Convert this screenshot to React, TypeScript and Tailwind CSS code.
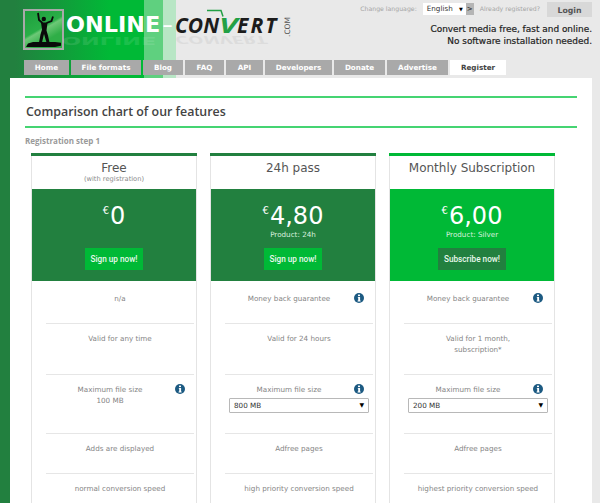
const verdana = "font-['DejaVu_Sans',Verdana,sans-serif]";

const navItems = [
  { label: "Home", w: "w-[45px]", ml: "ml-0" },
  { label: "File formats", w: "w-[70px]", ml: "ml-[2px]" },
  { label: "Blog", w: "w-[40px]", ml: "ml-[2px]" },
  { label: "FAQ", w: "w-[39px]", ml: "ml-[2px]" },
  { label: "API", w: "w-[37px]", ml: "ml-[2px]" },
  { label: "Developers", w: "w-[67px]", ml: "ml-[2px]" },
  { label: "Donate", w: "w-[51px]", ml: "ml-[2px]" },
  { label: "Advertise", w: "w-[61px]", ml: "ml-[2px]" },
];

function InfoIcon() {
  return (
    <svg viewBox="0 0 10 10" className="absolute right-[9px] top-0 w-[10px] h-[10px]">
      <circle cx="5" cy="5" r="5" fill="#1c5a82" />
      <rect x="4" y="1.600" width="2" height="1.500" fill="#fff" />
      <path d="M3.800 4h2.300v3.600h.5v.8H3.600v-.8h.6V4.800h-.4z" fill="#fff" />
    </svg>
  );
}

function Row({ h, pt = "pt-[9px]", children }: { h: string; pt?: string; children: React.ReactNode }) {
  return (
    <div className={`${h} ${pt} ml-[14px] mr-[2px] border-b border-[#e6e6e6] last:border-b-0 text-center text-[7.200px] leading-[11px] text-[#858585]`}>
      {children}
    </div>
  );
}

function SizeRow({ value, selectable }: { value: string; selectable?: boolean }) {
  return (
    <Row h="h-[59px]">
      <div className="relative pr-[20px]">
        <span>Maximum file size</span>
        <InfoIcon />
      </div>
      {selectable ? (
        <div className="relative mt-[3px] ml-[4px] flex h-[15px] w-[140px] items-center rounded-[1px] border border-[#b8b8b8] bg-white pl-[4px] text-[7.200px] text-[#333]">
          {value}
          <span className="absolute right-[4px] top-[1px] text-[6px] leading-[10px] text-black">▼</span>
        </div>
      ) : (
        <div className="pr-[20px]">{value}</div>
      )}
    </Row>
  );
}

function PlanCard({
  name,
  sub,
  price,
  product,
  button,
  dark,
  money,
  valid,
  size,
  ads,
  speed,
}: {
  name: string;
  sub?: string;
  price: string;
  product?: string;
  button: string;
  dark: boolean;
  money: boolean;
  valid: React.ReactNode;
  size: React.ReactNode;
  ads: string;
  speed: string;
}) {
  return (
    <div className="w-[166px] border-x border-[#e4e4e4] bg-white">
      <div className={`h-[3px] -mx-px ${dark ? "bg-[#22803f]" : "bg-[#00b936]"}`} />
      <div className="h-[33px] pt-[5px] text-center text-[#555]">
        <div className="text-[12px] leading-[14px]">{name}</div>
        {sub && <div className="text-[6.700px] leading-[8px] text-[#8a8a8a]">{sub}</div>}
      </div>
      <div className={`h-[92px] pt-[14px] text-center text-white ${dark ? "bg-[#22803f]" : "bg-[#00b936]"}`}>
        <div className="flex justify-center leading-none">
          <span className="mt-[2px] mr-[1px] text-[10px] leading-[12px]">€</span>
          <span className="text-[24px] leading-[26px]">{price}</span>
        </div>
        <div className="h-[11px] text-[7.200px] leading-[11px] text-[#d8f0df]">{product}</div>
        <div
          className={`mx-auto mt-[8px] inline-block h-[22px] px-[6px] font-['Roboto',sans-serif] text-[8.200px] font-medium leading-[22px] text-[#e8f8ec] ${
            dark ? "bg-[#00b936]" : "bg-[#22803f]"
          }`}
        >
          {button}
        </div>
      </div>
      <Row h="h-[43px]" pt="pt-[12px]">
        {money ? (
          <div className="relative pr-[20px]">
            Money back guarantee
            <InfoIcon />
          </div>
        ) : (
          "n/a"
        )}
      </Row>
      <Row h="h-[51px]">{valid}</Row>
      {size}
      <Row h="h-[40px]">{ads}</Row>
      <Row h="h-[30px]">{speed}</Row>
    </div>
  );
}

function Logo() {
  return (
    <div className="flex items-start">
      <div className="w-[41px] h-[41px] border-[2px] border-[#a9a9a9] bg-[linear-gradient(150deg,#1c9e3c_0%,#2aaf48_45%,#6dc877_50%,#2fae47_72%)] overflow-hidden">
        <svg viewBox="0 0 37 37" className="w-[37px] h-[37px]">
          <path d="M13 2l1 7 3.500 3M28 5.500l-1.500 4.500-5 2" fill="none" stroke="#0a0a0a" strokeWidth="1.800" />
          <circle cx="18.800" cy="8" r="2.200" fill="#0a0a0a" />
          <path d="M16 11.500h6.500l-1 8 1.500 5 1.500 7h-3l-2.500-8.500-2 8.500h-3l1.500-8 1.500-5z" fill="#0a0a0a" />
          <path d="M3 32.500l5-1.500h22l6 .8v3l-6 1.200H1z" fill="#0a0a0a" />
        </svg>
      </div>
      <div className="relative ml-[2px] mt-[5px] h-[36px] w-[230px] whitespace-nowrap font-bold">
        <span className="absolute left-0 top-[3px] origin-left scale-x-[1.09] text-[20.500px] leading-[16px] text-white">ONLINE</span>
        <span className="absolute left-[96px] top-[3px] origin-left scale-x-[1.5] text-[20.500px] leading-[16px] font-normal text-white">-</span>
        <span className="absolute left-[109px] top-[3px] font-['Open_Sans',sans-serif] text-[21px] leading-[16px] font-bold italic text-[#1c1c1c]">
          CON
          <span className="inline-block w-[18px] origin-left scale-x-[1.5] text-[#22a045]">V</span>
          <span className="tracking-[2px]">ERT</span>
        </span>
        <svg viewBox="0 0 18 8" className="absolute left-[141px] top-[-5px] w-[18px] h-[8px]">
          <path d="M0 1.500h14l2 6" fill="none" stroke="#22a045" strokeWidth="1.500" />
        </svg>
        <span className="absolute left-[217px] top-[23px] origin-top-left -rotate-90 text-[7.500px] leading-[9px] font-normal text-[#555]">
          .COM
        </span>
        <span aria-hidden className="absolute left-0 top-[18px] origin-center -scale-y-50 scale-x-[1.09] text-[20.500px] leading-[16px] text-white opacity-10">
          ONLINE
        </span>
        <span aria-hidden className="absolute left-[109px] top-[18px] origin-center -scale-y-50 font-['Open_Sans',sans-serif] text-[21px] leading-[16px] font-bold italic text-black opacity-5">
          CONVERT
        </span>
      </div>
    </div>
  );
}

export default function App() {
  return (
    <div className={`${verdana} w-[600px] h-[503px] overflow-hidden bg-[#e9e9e9]`}>
      <header className="h-[78px] bg-[linear-gradient(to_right,#22803f_0px,#22803f_15px,#00b936_110px,#00b936_144px,#5fd07f_144px,#5fd07f_163px,#b8e6c5_163px,#b8e6c5_176px,#e9e9e9_176px)]">
        <div className="flex h-[60px]">
          <div className="pl-[23px] pt-[9px]">
            <Logo />
          </div>
          <div className="ml-auto pr-[8px] pt-[2px] text-right">
            <div className="flex items-start justify-end text-[6.200px] leading-[12px] text-[#a5a5a5]">
              <span className="mt-[1px]">Change language:</span>
              <div className="ml-[6px] mt-[1px] flex h-[12px] w-[43px] justify-between bg-white pl-[4px] pr-[3px] text-[7.200px] text-[#333]">
                <span>English</span>
                <span className="text-[5px] text-black">▼</span>
              </div>
              <div className="h-[12px] mt-[1px] w-[8px] bg-[#b5b5b5] text-center text-[7px] font-bold text-[#444]">&gt;</div>
              <span className="ml-[6px] mt-[1px]">Already registered?</span>
              <div className="ml-[7px] h-[15px] w-[45px] bg-[#d8d8d8] text-center text-[7.800px] font-bold leading-[17px] text-[#555]">Login</div>
            </div>
            <div className="mt-[7px] text-[8.950px] leading-[11.500px] text-[#222] [-webkit-text-stroke:0.2px_#222]">
              <div>Convert media free, fast and online.</div>
              <div>No software installation needed.</div>
            </div>
          </div>
        </div>
        <nav className="flex pl-[24px] h-[15px]">
          {navItems.map((n) => (
            <div
              key={n.label}
              className={`${n.w} ${n.ml} bg-[#a9a9a9] text-center font-bold text-[7.200px] leading-[15px] text-white`}
            >
              {n.label}
            </div>
          ))}
          <div className="ml-[2px] w-[56px] bg-white text-center font-bold text-[7.200px] leading-[15px] text-[#444]">
            Register
          </div>
        </nav>
      </header>

      <div className="bg-[linear-gradient(to_right,#22803f_10px,#e9e9e9_10px)] pl-[10px] pr-[8px]">
        <main className="h-[425px] bg-white pl-[15px] pr-[15px] pt-[18px]">
          <div className="h-[2px] bg-[#45d472]" />
          <div className="h-[28px] pl-[1px] font-['Open_Sans',sans-serif] text-[12.400px] font-semibold leading-[28px] text-[#444]">
            Comparison chart of our features
          </div>
          <div className="h-[2px] bg-[#45d472]" />
          <div className="mt-[7px] font-['Open_Sans',sans-serif] text-[8px] leading-[11px] font-bold text-[#9a9a9a]">Registration step 1</div>
          <div className="mt-[7px] ml-[6px] flex gap-[13px]">
            <PlanCard
              name="Free"
              sub="(with registration)"
              price="0"
              button="Sign up now!"
              dark
              money={false}
              valid="Valid for any time"
              size={<SizeRow value="100 MB" />}
              ads="Adds are displayed"
              speed="normal conversion speed"
            />
            <PlanCard
              name="24h pass"
              price="4,80"
              product="Product: 24h"
              button="Sign up now!"
              dark
              money
              valid="Valid for 24 hours"
              size={<SizeRow value="800 MB" selectable />}
              ads="Adfree pages"
              speed="high priority conversion speed"
            />
            <PlanCard
              name="Monthly Subscription"
              price="6,00"
              product="Product: Silver"
              button="Subscribe now!"
              dark={false}
              money
              valid={
                <>
                  Valid for 1 month,
                  <br />
                  subscription*
                </>
              }
              size={<SizeRow value="200 MB" selectable />}
              ads="Adfree pages"
              speed="highest priority conversion speed"
            />
          </div>
        </main>
      </div>
    </div>
  );
}
